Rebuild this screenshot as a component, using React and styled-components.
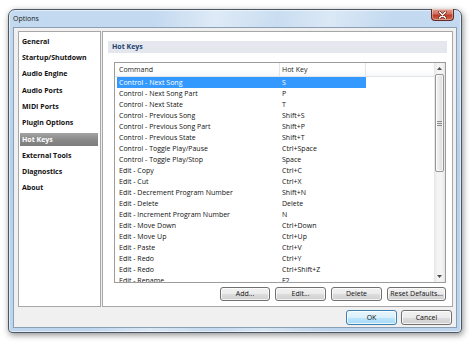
import React from 'react';
import styled, { createGlobalStyle } from 'styled-components';

const Global = createGlobalStyle`
  html, body { margin: 0; padding: 0; background: #ffffff; }
  body { font-family: "Segoe UI", "Open Sans", "Noto Sans", sans-serif; }
  * { box-sizing: border-box; }
`;

const Page = styled.div`
  width: 474px;
  height: 350px;
  padding: 9px 0 0 8px;
`;

const Window = styled.div`
  width: 454px;
  height: 324px;
  border: 1px solid #4c5865;
  border-radius: 7px 7px 4px 4px;
  background:
    linear-gradient(102deg, rgba(255,255,255,0) 28%, rgba(255,255,255,0.45) 40%, rgba(255,255,255,0.1) 52%, rgba(255,255,255,0.4) 62%, rgba(255,255,255,0) 74%),
    linear-gradient(180deg, #c4daf0 0%, #b7d0ea 45%, #bdd5ed 100%);
  box-shadow: 1px 2px 6px rgba(0,0,0,0.45), inset 0 0 0 1px rgba(255,255,255,0.55);
  display: flex;
  flex-direction: column;
`;

const TitleBar = styled.div`
  height: 17px;
  display: flex;
  align-items: flex-start;
  justify-content: space-between;
  padding: 0 7px 0 4px;
`;

const Title = styled.div`
  font-size: 7px;
  line-height: 17px;
  color: #1a1a1a;
`;

const CloseButton = styled.div`
  width: 23px;
  height: 12px;
  margin-top: -1px;
  border: 1px solid #5e2a2a;
  border-top: none;
  border-radius: 0 0 4px 4px;
  background: linear-gradient(180deg, #e3a295 0%, #d0705f 45%, #bb3a27 55%, #cf6a4f 100%);
  box-shadow: inset 0 0 0 1px rgba(255,255,255,0.35);
  display: flex;
  align-items: center;
  justify-content: center;
`;

const Client = styled.div`
  flex: 1;
  margin: 0 4px 4px 4px;
  border: 1px solid #8c9fb4;
  background: #f0f0f0;
  padding: 3px 3px 2px 4px;
  display: flex;
  flex-direction: column;
`;

const MainRow = styled.div`
  height: 276px;
  display: flex;
  gap: 1px;
`;

const Sidebar = styled.div`
  width: 83px;
  background: #ffffff;
  border: 1px solid #a7a7a7;
  display: flex;
  flex-direction: column;
  padding-top: 1px;
`;

const NavItem = styled.div`
  height: 13px;
  margin: 1.67px 2px 1.66px 1px;
  padding-left: 2px;
  font-size: 7px;
  font-weight: 700;
  line-height: 13px;
  white-space: nowrap;
  color: ${p => (p.$active ? '#ffffff' : '#111111')};
  background: ${p => (p.$active ? 'linear-gradient(180deg, #a3a3a3 0%, #8a8a8a 50%, #7c7c7c 100%)' : 'transparent')};
`;

const Panel = styled.div`
  flex: 1;
  background: #ffffff;
  border: 1px solid #a7a7a7;
  padding: 9px 5px 5px 5px;
  display: flex;
  flex-direction: column;
`;

const SectionHeader = styled.div`
  height: 12px;
  background: #e4e8ee;
  padding-left: 4px;
  font-size: 7px;
  font-weight: 700;
  line-height: 12px;
  color: #22406e;
`;

const Section = styled.div`
  padding: 0 1px 0 6px;
  display: flex;
  flex-direction: column;
`;

const ListBox = styled.div`
  margin-top: 9px;
  height: 221px;
  border: 1px solid #9c9c9c;
  display: flex;
  overflow: hidden;
`;

const ListMain = styled.div`
  flex: 1;
  display: flex;
  flex-direction: column;
  overflow: hidden;
`;

const HeaderRow = styled.div`
  height: 14px;
  flex: none;
  display: flex;
  padding-left: 2px;
  background: linear-gradient(180deg, #ffffff 0%, #ffffff 50%, #f7f8fa 100%);
  border-bottom: 1px solid #e3e5e9;
`;

const HeaderCell = styled.div`
  width: ${p => p.$w}px;
  padding-left: 2px;
  font-size: 7px;
  line-height: 14px;
  color: #1e1e1e;
  border-right: 1px solid #e3e5e9;
`;

const Rows = styled.div`
  display: flex;
  flex-direction: column;
  padding-left: 2px;
`;

const Row = styled.div`
  height: 11px;
  width: 249px;
  flex: none;
  display: flex;
  background: ${p => (p.$selected ? '#3399ff' : 'transparent')};
  color: ${p => (p.$selected ? '#ffffff' : '#111111')};
`;

const Cell = styled.div`
  width: ${p => p.$w}px;
  padding-left: 2px;
  font-size: 7px;
  line-height: 11px;
  white-space: nowrap;
  overflow: hidden;
`;

const ScrollBar = styled.div`
  width: 11px;
  flex: none;
  display: flex;
  flex-direction: column;
  background: linear-gradient(90deg, #e6e6e6 0%, #f4f4f4 30%, #f4f4f4 70%, #e6e6e6 100%);
`;

const ScrollArrow = styled.div`
  height: 11px;
  flex: none;
  display: flex;
  align-items: center;
  justify-content: center;
`;

const Thumb = styled.div`
  height: 98px;
  flex: none;
  margin: 0 1px;
  border: 1px solid #979797;
  border-radius: 2px;
  background: linear-gradient(90deg, #f4f4f4 0%, #e9e9e9 50%, #dcdcdc 100%);
  box-shadow: inset 0 0 0 1px rgba(255,255,255,0.7);
  display: flex;
  align-items: center;
  justify-content: center;
`;

const Track = styled.div`
  flex: 1;
`;

const ButtonRow = styled.div`
  margin-top: ${p => p.$mt}px;
  display: flex;
  justify-content: flex-end;
  gap: ${p => p.$gap}px;
  padding-right: ${p => p.$pr}px;
`;

const Button = styled.div`
  width: ${p => p.$w}px;
  height: ${p => p.$h}px;
  border: 1px solid ${p => (p.$default ? '#3c7fb1' : '#707070')};
  border-radius: 3px;
  background: ${p =>
    p.$default
      ? 'linear-gradient(180deg, #eaf6fd 0%, #d9f0fc 50%, #bee6fd 51%, #a7d9f5 100%)'
      : 'linear-gradient(180deg, #f2f2f2 0%, #ebebeb 50%, #dddddd 51%, #cfcfcf 100%)'};
  box-shadow: inset 0 0 0 1px rgba(255,255,255,0.75);
  font-size: 7px;
  line-height: ${p => p.$h - 2}px;
  text-align: center;
  color: #111111;
  white-space: nowrap;
`;

const navItems = [
  'General',
  'Startup/Shutdown',
  'Audio Engine',
  'Audio Ports',
  'MIDI Ports',
  'Plugin Options',
  'Hot Keys',
  'External Tools',
  'Diagnostics',
  'About',
];

const hotKeys = [
  ['Control - Next Song', 'S'],
  ['Control - Next Song Part', 'P'],
  ['Control - Next State', 'T'],
  ['Control - Previous Song', 'Shift+S'],
  ['Control - Previous Song Part', 'Shift+P'],
  ['Control - Previous State', 'Shift+T'],
  ['Control - Toggle Play/Pause', 'Ctrl+Space'],
  ['Control - Toggle Play/Stop', 'Space'],
  ['Edit - Copy', 'Ctrl+C'],
  ['Edit - Cut', 'Ctrl+X'],
  ['Edit - Decrement Program Number', 'Shift+N'],
  ['Edit - Delete', 'Delete'],
  ['Edit - Increment Program Number', 'N'],
  ['Edit - Move Down', 'Ctrl+Down'],
  ['Edit - Move Up', 'Ctrl+Up'],
  ['Edit - Paste', 'Ctrl+V'],
  ['Edit - Redo', 'Ctrl+Y'],
  ['Edit - Redo', 'Ctrl+Shift+Z'],
  ['Edit - Rename', 'F2'],
];

const CloseIcon = () => (
  <svg width="9" height="8" viewBox="0 0 9 8">
    <path d="M1.5 1 L7.5 7 M7.5 1 L1.5 7" stroke="#5a1e16" strokeWidth="2.6" strokeLinecap="round" />
    <path d="M1.5 1 L7.5 7 M7.5 1 L1.5 7" stroke="#ffffff" strokeWidth="1.5" strokeLinecap="round" />
  </svg>
);

const Arrow = ({ down }) => (
  <svg width="5" height="3" viewBox="0 0 5 3">
    <path d={down ? 'M0 0 L5 0 L2.5 3 Z' : 'M0 3 L5 3 L2.5 0 Z'} fill="#4d4d4d" />
  </svg>
);

const Grip = () => (
  <svg width="5" height="5" viewBox="0 0 5 5">
    <path d="M0 0.5 H5 M0 2.5 H5 M0 4.5 H5" stroke="#8a8a8a" strokeWidth="1" />
  </svg>
);

export default function App() {
  return (
    <>
      <Global />
      <Page>
        <Window>
          <TitleBar>
            <Title>Options</Title>
            <CloseButton>
              <CloseIcon />
            </CloseButton>
          </TitleBar>
          <Client>
            <MainRow>
              <Sidebar>
                {navItems.map(item => (
                  <NavItem key={item} $active={item === 'Hot Keys'}>
                    {item}
                  </NavItem>
                ))}
              </Sidebar>
              <Panel>
                <SectionHeader>Hot Keys</SectionHeader>
                <Section>
                  <ListBox>
                    <ListMain>
                      <HeaderRow>
                        <HeaderCell $w={163}>Command</HeaderCell>
                        <HeaderCell $w={86}>Hot Key</HeaderCell>
                      </HeaderRow>
                      <Rows>
                        {hotKeys.map(([cmd, key], i) => (
                          <Row key={i} $selected={i === 0}>
                            <Cell $w={163}>{cmd}</Cell>
                            <Cell $w={86}>{key}</Cell>
                          </Row>
                        ))}
                      </Rows>
                    </ListMain>
                    <ScrollBar>
                      <ScrollArrow>
                        <Arrow />
                      </ScrollArrow>
                      <Thumb>
                        <Grip />
                      </Thumb>
                      <Track />
                      <ScrollArrow>
                        <Arrow down />
                      </ScrollArrow>
                    </ScrollBar>
                  </ListBox>
                  <ButtonRow $mt={4} $gap={5} $pr={0}>
                    <Button $w={50} $h={14}>Add...</Button>
                    <Button $w={51} $h={14}>Edit...</Button>
                    <Button $w={51} $h={14}>Delete</Button>
                    <Button $w={59} $h={14}>Reset Defaults...</Button>
                  </ButtonRow>
                </Section>
              </Panel>
            </MainRow>
            <ButtonRow $mt={3} $gap={4} $pr={1}>
              <Button $w={51} $h={15} $default>OK</Button>
              <Button $w={51} $h={15}>Cancel</Button>
            </ButtonRow>
          </Client>
        </Window>
      </Page>
    </>
  );
}
